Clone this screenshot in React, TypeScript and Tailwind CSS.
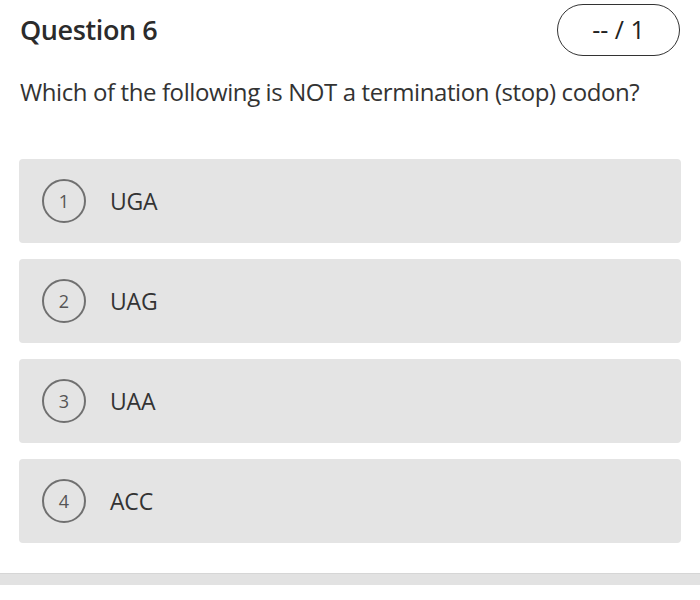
import React from 'react';

const options = [
  { n: 1, label: 'UGA' },
  { n: 2, label: 'UAG' },
  { n: 3, label: 'UAA' },
  { n: 4, label: 'ACC' },
];

const App: React.FC = () => {
  return (
    <div
      className="w-[700px] h-[600px] bg-white overflow-hidden"
      style={{ fontFamily: '"Open Sans", "Liberation Sans", sans-serif' }}
    >
      <div className="flex items-center justify-between pl-5 pr-[20px] pt-[4px]">
        <h1 className="text-[27px] font-semibold text-[#2b2b2b] tracking-[-0.4px]">Question 6</h1>
        <div className="w-[123px] h-[52px] rounded-full border-[1.5px] border-[#333] flex items-center justify-center text-[25px] text-[#222]">
          -- / 1
        </div>
      </div>

      <p className="mt-[20px] px-5 text-[24px] leading-[32px] text-[#333] tracking-[-0.4px]">
        Which of the following is NOT a termination (stop) codon?
      </p>

      <div className="mt-[51px] px-[19px] flex flex-col gap-4">
        {options.map((o) => (
          <div key={o.n} className="h-[84px] bg-[#e4e4e4] rounded-[4px] flex items-center pl-[23px]">
            <div className="w-[44px] h-[44px] rounded-full border-2 border-[#707070] flex items-center justify-center text-[18px] text-[#555]">
              {o.n}
            </div>
            <span className="ml-[24px] text-[23px] text-[#333] tracking-[-0.2px]">{o.label}</span>
          </div>
        ))}
      </div>

      <div className="mt-[30px] h-[12px] bg-[#e2e2e2] border-t border-[#d6d6d6]" />
    </div>
  );
};

export default App;
